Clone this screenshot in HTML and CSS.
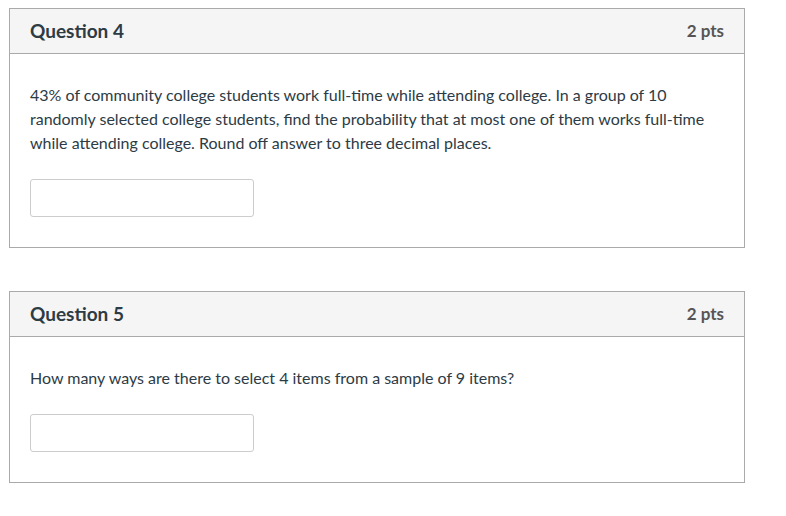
FILE: index.html
```html
<!DOCTYPE html>
<html>
<head>
<meta charset="utf-8">
<link rel="stylesheet" href="styles.css">
</head>
<body>
<div class="quiz">
  <div class="question">
    <div class="header">
      <span class="title">Question 4</span>
      <span class="points">2 pts</span>
    </div>
    <div class="content">
      <p class="text">43% of community college students work full-time while attending college. In a group of 10 randomly selected college students, find the probability that at most one of them works full-time while attending college. Round off answer to three decimal places.</p>
      <input class="answer" type="text">
    </div>
  </div>
  <div class="question">
    <div class="header">
      <span class="title">Question 5</span>
      <span class="points">2 pts</span>
    </div>
    <div class="content">
      <p class="text">How many ways are there to select 4 items from a sample of 9 items?</p>
      <input class="answer" type="text">
    </div>
  </div>
</div>
</body>
</html>
```
FILE: styles.css
```css
html, body {
  margin: 0;
  padding: 0;
  background: #ffffff;
}
body {
  font-family: Lato, "Open Sans", sans-serif;
  color: #2d3b45;
}
.quiz {
  display: flex;
  flex-direction: column;
  gap: 43px;
  padding: 8px 0 0 9px;
  width: 736px;
}
.question {
  border: 1px solid #aaaaaa;
  background: #fff;
}
.header {
  display: flex;
  justify-content: space-between;
  align-items: center;
  box-sizing: border-box;
  height: 45px;
  padding: 0 20px 2px;
  background: #f5f5f5;
  border-bottom: 1px solid #aaaaaa;
}
.title {
  font-weight: 700;
  font-size: 19px;
  color: #2d3b45;
}
.points {
  font-weight: 700;
  font-size: 17px;
  color: #555555;
}
.content {
  padding: 29px 20px 30px;
}
.text {
  margin: 0 0 24px;
  font-size: 16px;
  line-height: 24px;
  color: #2d3b45;
}
.answer {
  display: block;
  box-sizing: border-box;
  width: 224px;
  height: 38px;
  margin: 0;
  border: 1px solid #cccccc;
  border-radius: 3px;
  background: #fff;
  padding: 4px 8px;
}
```
